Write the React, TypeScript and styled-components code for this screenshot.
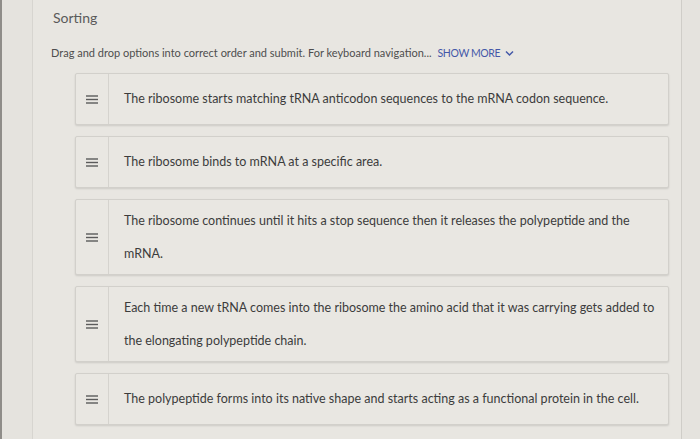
import React from "react";
import styled, { createGlobalStyle } from "styled-components";

const Global = createGlobalStyle`
  html, body { margin: 0; padding: 0; }
  body {
    background: #e5e3de;
    font-family: Lato, "Open Sans", sans-serif;
    overflow: hidden;
  }
`;

const Page = styled.div`
  display: flex;
  width: 700px;
  height: 439px;
  background: #e5e3de;
`;

const EdgeStrip = styled.div`
  width: 2px;
  background: #8f8d89;
`;

const Gutter = styled.div<{ $w: number }>`
  width: ${(p) => p.$w}px;
  flex: none;
`;

const Panel = styled.div`
  width: 650px;
  flex: none;
  border-left: 1px solid #d7d5d0;
  border-right: 1px solid #cfcdc8;
  background: #e8e6e1;
  padding: 8px 0 0 20px;
  box-sizing: border-box;
`;

const Title = styled.div`
  font-family: Lato, sans-serif;
  font-size: 14px;
  color: #5a5a5a;
  line-height: 20px;
`;

const Instruction = styled.div`
  margin-top: 16px;
  font-family: Lato, sans-serif;
  font-size: 11px;
  color: #4e4e4e;
  line-height: 18px;
  margin-left: -2px;
  display: flex;
  align-items: center;
  white-space: nowrap;
`;

const ShowMore = styled.span`
  display: inline-flex;
  align-items: center;
  color: #4458a8;
  margin-left: 6px;
  font-size: 10.5px;
  letter-spacing: -0.4px;
`;

const List = styled.div`
  margin-top: 11px;
  margin-left: 22px;
  width: 594px;
  display: flex;
  flex-direction: column;
  gap: 11px;
`;

const Card = styled.div`
  display: flex;
  background: #e9e7e2;
  border: 1px solid #d2d0cb;
  box-shadow: 0 1px 2px rgba(0, 0, 0, 0.12);
  border-radius: 2px;
`;

const Handle = styled.div`
  width: 32px;
  flex: none;
  display: flex;
  align-items: center;
  justify-content: center;
  border-right: 1px solid #d5d3ce;
`;

const Body = styled.div<{ $tall: boolean }>`
  flex: 1;
  padding: ${(p) => (p.$tall ? "4px 6px 4px 15px" : "14px 6px 14px 15px")};
  font-family: Lato, sans-serif;
  font-size: 12.5px;
  color: #3c3c3c;
  line-height: ${(p) => (p.$tall ? "33px" : "22px")};
`;

const Grip = () => (
  <svg width="12" height="9" viewBox="0 0 12 9">
    <g stroke="#5b5b5b" strokeWidth="1.4">
      <line x1="0" y1="1" x2="12" y2="1" />
      <line x1="0" y1="4.5" x2="12" y2="4.5" />
      <line x1="0" y1="8" x2="12" y2="8" />
    </g>
  </svg>
);

const Chevron = () => (
  <svg width="9" height="7" viewBox="0 0 9 7" style={{ marginLeft: 5 }}>
    <polyline points="1,1.5 4.5,5 8,1.5" fill="none" stroke="#4458a8" strokeWidth="1.5" />
  </svg>
);

const items = [
  "The ribosome starts matching tRNA anticodon sequences to the mRNA codon sequence.",
  "The ribosome binds to mRNA at a specific area.",
  "The ribosome continues until it hits a stop sequence then it releases the polypeptide and the mRNA.",
  "Each time a new tRNA comes into the ribosome the amino acid that it was carrying gets added to the elongating polypeptide chain.",
  "The polypeptide forms into its native shape and starts acting as a functional protein in the cell.",
];

const tall = [false, false, true, true, false];

export default function App() {
  return (
    <>
      <Global />
      <Page>
        <EdgeStrip />
        <Gutter $w={30} />
        <Panel>
          <Title>Sorting</Title>
          <Instruction>
            Drag and drop options into correct order and submit. For keyboard navigation...
            <ShowMore>
              SHOW MORE
              <Chevron />
            </ShowMore>
          </Instruction>
          <List>
            {items.map((t, i) => (
              <Card key={i}>
                <Handle>
                  <Grip />
                </Handle>
                <Body $tall={tall[i]}>{t}</Body>
              </Card>
            ))}
          </List>
        </Panel>
      </Page>
    </>
  );
}
